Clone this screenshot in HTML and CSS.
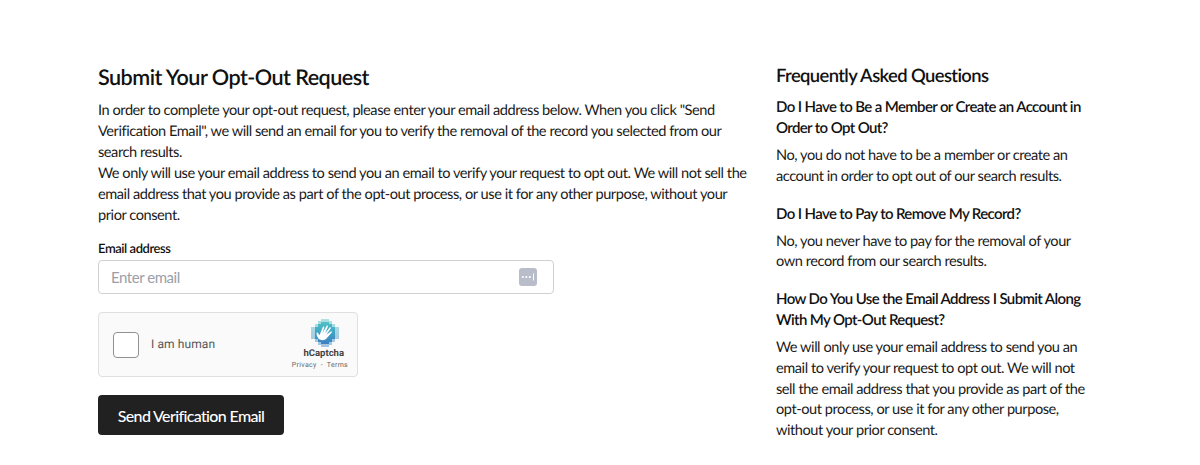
FILE: index.html
```html
<!DOCTYPE html>
<html lang="en">
<head>
    <meta charset="UTF-8">
    <meta name="viewport" content="width=device-width, initial-scale=1.0">
    <title>Opt-Out Request</title>
    <link rel="stylesheet" href="styles.css">
</head>
<body>

    <div class="container">
        <!-- Opt-out form -->
        <div class="main-col">
            <h1>Submit Your Opt-Out Request</h1>
            <p class="intro">In order to complete your opt-out request, please enter your email address below. When you click "Send Verification Email", we will send an email for you to verify the removal of the record you selected from our search results.<br>We only will use your email address to send you an email to verify your request to opt out. We will not sell the email address that you provide as part of the opt-out process, or use it for any other purpose, without your prior consent.</p>

            <form>
                <label class="field-label" for="email">Email address</label>
                <div class="input-wrap">
                    <input type="text" id="email" placeholder="Enter email">
                    <svg class="key-icon" viewBox="0 0 18 18" width="18" height="18" aria-hidden="true">
                        <rect width="18" height="18" rx="3" fill="#b9bdc9"/>
                        <circle cx="3.8" cy="9" r="1.1" fill="#fff"/>
                        <circle cx="7.3" cy="9" r="1.1" fill="#fff"/>
                        <circle cx="10.8" cy="9" r="1.1" fill="#fff"/>
                        <rect x="14" y="5.5" width="1" height="7" fill="#fff"/>
                    </svg>
                </div>

                <div class="captcha">
                    <span class="captcha-check"></span>
                    <span class="captcha-text">I am human</span>
                    <div class="captcha-brand">
                        <svg class="captcha-logo" viewBox="0 0 28 28" width="28" height="28" aria-hidden="true">
                            <defs>
                                <linearGradient id="hc" x1="0" y1="0" x2="0" y2="1">
                                    <stop offset="0" stop-color="#4fc3c4"/>
                                    <stop offset="0.55" stop-color="#3f9fc4"/>
                                    <stop offset="1" stop-color="#3d7fc2"/>
                                </linearGradient>
                            </defs>
                            <path fill="url(#hc)" opacity="0.45" d="M10 0h8v2h3v3h3v3h4v12h-4v3h-3v3h-3v2h-8v-2h-3v-3h-3v-3h-4v-12h4v-3h3v-3h3z"/>
                            <path fill="url(#hc)" d="M10 3h8v2h3v3h3v12h-3v3h-3v2h-8v-2h-3v-3h-3v-12h3v-3h3z"/>
                            <path fill="#fff" d="M8.500 20.500c-2-1.500-2.800-3.800-3-6-.1-1 1-1.300 1.500-.5l1.500 2.300 3.300-8.300c.4-1 1.800-.5 1.500.5l-1.800 5.600 4-7.100c.5-.9 1.800-.3 1.400.7l-3 6.700 4.600-5.700c.7-.8 1.800 0 1.200.9l-4.300 6.200 4.300-3.400c.8-.6 1.700.4 1 1.200-1.700 2-3.400 4-5.200 6-2 2.100-4.500 2.100-6.500.9z"/>
                        </svg>
                        <span class="captcha-name">hCaptcha</span>
                        <span class="captcha-links">Privacy &nbsp;-&nbsp; Terms</span>
                    </div>
                </div>

                <button type="button">Send Verification Email</button>
            </form>
        </div>

        <!-- FAQ -->
        <div class="side-col">
            <h2>Frequently Asked Questions</h2>

            <h3>Do I Have to Be a Member or Create an Account in Order to Opt Out?</h3>
            <p>No, you do not have to be a member or create an account in order to opt out of our search results.</p>

            <h3>Do I Have to Pay to Remove My Record?</h3>
            <p>No, you never have to pay for the removal of your own record from our search results.</p>

            <h3>How Do You Use the Email Address I Submit Along With My Opt-Out Request?</h3>
            <p>We will only use your email address to send you an email to verify your request to opt out. We will not sell the email address that you provide as part of the opt-out process, or use it for any other purpose, without your prior consent.</p>
        </div>
    </div>

</body>
</html>
```

FILE: styles.css
```css
/* General Styles */
* {
    box-sizing: border-box;
}

body {
    font-family: Lato, "Open Sans", sans-serif;
    font-size: 14.6px;
    line-height: 20.6px;
    letter-spacing: -0.031em;
    text-rendering: geometricPrecision;
    background-color: #fff;
    margin: 0;
    padding: 0;
    color: #1a1a1a;
    height: 465px;
    overflow: hidden;
}

.container {
    display: flex;
    padding: 64px 0 0 98px;
}

.main-col {
    width: 678px;
    padding-right: 28px;
}

.side-col {
    width: 316px;
}

/* Headings */
h1 {
    margin: 0 0 9px;
    font-size: 21.6px;
    line-height: 27px;
    font-weight: 600;
    letter-spacing: -0.025em;
    color: #111;
}

h2 {
    margin: 0 0 10px;
    font-size: 18.4px;
    line-height: 23px;
    font-weight: 600;
    letter-spacing: -0.033em;
    color: #111;
}

h3 {
    margin: 0 0 7px;
    font-size: 15px;
    line-height: 21px;
    font-weight: 600;
    letter-spacing: -0.042em;
    color: #111;
}

p {
    margin: 0 0 16.5px;
}

.intro {
    line-height: 21px;
    margin-bottom: 12px;
}

/* Form */
form {
    display: flex;
    flex-direction: column;
    align-items: flex-start;
}

.field-label {
    font-size: 13px;
    line-height: 20px;
    font-weight: 600;
    color: #111;
    margin-bottom: 2px;
}

.input-wrap {
    display: flex;
    align-items: center;
    width: 456px;
    height: 34px;
    padding: 0 16px 0 12px;
    border: 1px solid #ced0d3;
    border-radius: 4px;
    margin-bottom: 18px;
}

.input-wrap input {
    flex: 1;
    border: none;
    outline: none;
    padding: 0;
    font-family: inherit;
    font-size: 15px;
    letter-spacing: inherit;
    color: #212121;
}

.input-wrap input::placeholder {
    color: #9b9ea8;
    opacity: 1;
}

/* hCaptcha box */
.captcha {
    display: flex;
    align-items: center;
    width: 260px;
    height: 65px;
    padding: 0 9px 0 14px;
    background-color: #fafafa;
    border: 1px solid #e0e0e0;
    border-radius: 4px;
    margin-bottom: 18px;
    font-family: Roboto, sans-serif;
    letter-spacing: normal;
}

.captcha-check {
    width: 26px;
    height: 26px;
    background-color: #fff;
    border: 1px solid #919191;
    border-radius: 4px;
}

.captcha-text {
    margin-left: 12px;
    font-size: 12px;
    letter-spacing: 0.1px;
    color: #555;
}

.captcha-brand {
    display: flex;
    flex-direction: column;
    align-items: flex-end;
    margin-left: auto;
}

.captcha-logo {
    display: block;
    margin: 0 9px 1px 0;
}

.captcha-name {
    margin-right: 4px;
    font-size: 9.5px;
    line-height: 12px;
    font-weight: 700;
    color: #444;
}

.captcha-links {
    font-size: 7px;
    line-height: 11px;
    letter-spacing: 0.3px;
    color: #666;
}

/* Button */
button {
    width: 186px;
    height: 40px;
    padding: 0;
    background-color: #212121;
    border: none;
    border-radius: 4px;
    color: #fff;
    font-family: inherit;
    font-size: 16px;
    font-weight: 500;
    letter-spacing: -0.04em;
    cursor: pointer;
}
```
